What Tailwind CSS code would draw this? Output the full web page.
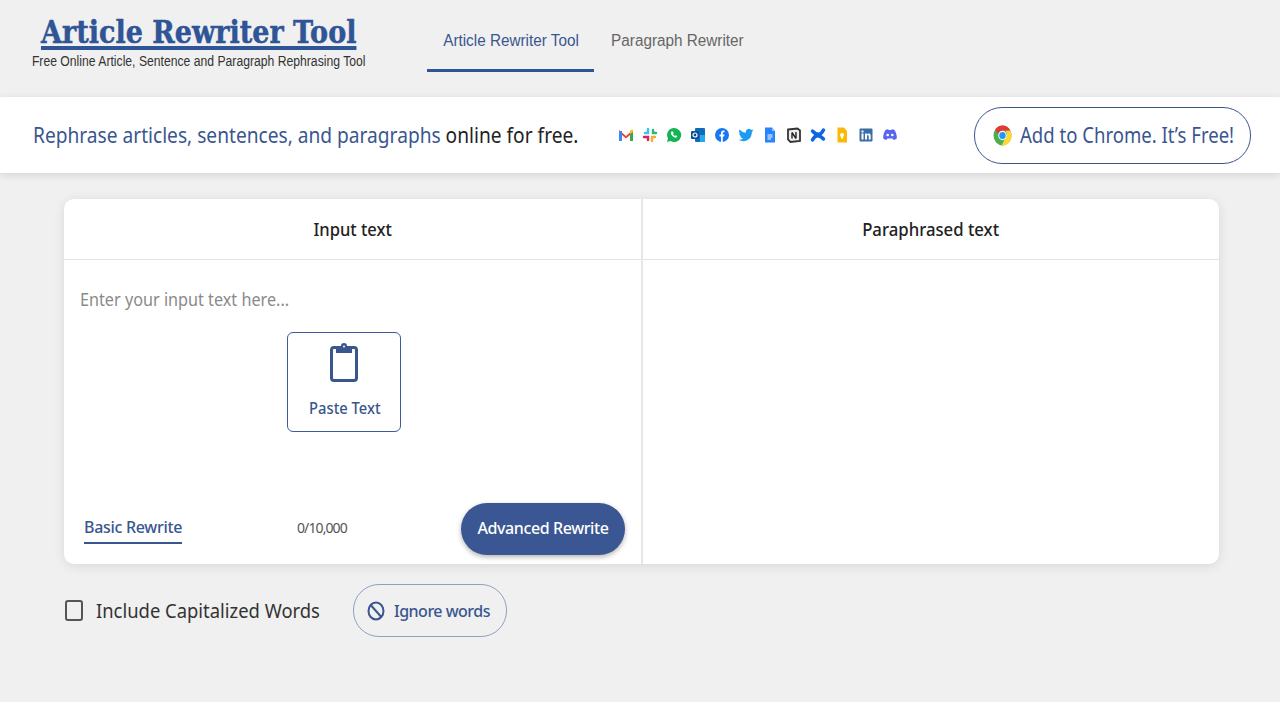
<!DOCTYPE html>
<html lang="en">
<head>
    <meta charset="UTF-8">
    <title>Article Rewriter Tool</title>
    <script src="https://cdn.jsdelivr.net/npm/@tailwindcss/browser@4"></script>
</head>
<body class="bg-white font-['Noto_Sans',sans-serif] h-[720px] overflow-hidden">
    <div class="bg-[#f0f0f0] h-[702px]">
        <!-- Top header -->
        <header class="h-[97px] flex">
            <div class="w-[398px] flex flex-col items-center pt-[14px]">
                <a class="inline-block scale-x-[.845] font-['DejaVu_Serif',serif] font-bold text-[32px] leading-[36px] text-[#2f5597] [-webkit-text-stroke:0.5px_#2f5597] underline decoration-[4px] underline-offset-[3px] whitespace-nowrap">Article Rewriter Tool</a>
                <div class="scale-x-[.87] font-['Liberation_Sans',sans-serif] text-[14px] leading-[16px] mt-[3px] text-[#333] whitespace-nowrap">Free Online Article, Sentence and Paragraph Rephrasing Tool</div>
            </div>
            <nav class="flex ml-[29px] font-['Liberation_Sans',sans-serif] text-[16px]">
                <a class="w-[167px] h-[72px] pt-[29px] text-center text-[#39568f] border-b-[3px] border-[#2f5597]"><span class="inline-block scale-x-[.955]">Article Rewriter Tool</span></a>
                <a class="w-[167px] h-[72px] pt-[29px] text-center text-[#666]"><span class="inline-block scale-x-[.955] whitespace-nowrap">Paragraph Rewriter</span></a>
            </nav>
        </header>

        <!-- Promo strip -->
        <div class="h-[76px] bg-white shadow-[0_2px_8px_rgba(0,0,0,0.12)] flex items-center pl-[33px]">
            <div class="shrink-0 w-[585px] -mt-[2px] origin-left scale-x-[.87] text-[22px] text-[#39568f] whitespace-nowrap">Rephrase articles, sentences, and paragraphs <span class="text-[#222]">online for free.</span></div>
            <div class="flex items-center gap-[8px] w-[356px] shrink-0">
                <!-- gmail -->
                <svg width="16" height="14" viewBox="0 0 16 14"><path d="M1 13V2l7 6 7-6v11h-3V7L8 10.500 4 7v6z" fill="#ea4335"/><path d="M1 13V3h3v10z" fill="#4285f4"/><path d="M12 13V3h3v10z" fill="#34a853"/><path d="M12 6V3l2-1.500 1 .5v2z" fill="#fbbc04"/></svg>
                <!-- slack -->
                <svg width="16" height="16" viewBox="0 0 16 16" fill="none" stroke-width="2.400" stroke-linecap="round"><path d="M6 2v4H3" stroke="#36c5f0"/><path d="M14 6h-3V3" stroke="#2eb67d"/><path d="M10 14v-4h3" stroke="#ecb22e"/><path d="M2 10h4v3" stroke="#e01e5a"/></svg>
                <!-- whatsapp -->
                <svg width="16" height="16" viewBox="0 0 16 16"><path d="M8 1a7 7 0 0 0-6 10.500L1 15l3.600-1A7 7 0 1 0 8 1z" fill="#12b454"/><path d="M5.500 4.500c-1 1-.8 2.500.5 4s3 2.500 4.300 2c.7-.3 1-.9 1-1.400L9.700 8.200l-.8.800c-.8-.3-1.500-1-1.900-1.900l.8-.8L6.900 4.500z" fill="#fff"/></svg>
                <!-- outlook -->
                <svg width="16" height="16" viewBox="0 0 16 16"><rect x="5" y="1" width="10" height="14" rx="1" fill="#0f6cbd"/><rect x="10" y="8" width="5" height="7" fill="#28a8ea"/><rect x="1" y="4" width="8" height="8" rx="1" fill="#0a4f94"/><circle cx="5" cy="8" r="2" fill="none" stroke="#fff" stroke-width="1.200"/></svg>
                <!-- facebook -->
                <svg width="16" height="16" viewBox="0 0 16 16"><circle cx="8" cy="8" r="7" fill="#1877f2"/><path d="M7 15V9.500H5.500V7.500H7V6c0-1.600 1-2.500 2.400-2.500l1.100.1V5.300H9.700c-.7 0-.9.400-.9.900v1.300h1.700l-.3 2H8.800V15z" fill="#fff"/></svg>
                <!-- twitter -->
                <svg width="16" height="16" viewBox="0 0 24 24"><path d="M23 5c-.8.400-1.700.6-2.600.7.900-.6 1.600-1.400 2-2.500-.9.500-1.800.9-2.900 1.100A4.600 4.600 0 0 0 11.700 8.500 13 13 0 0 1 2.300 3.700a4.600 4.600 0 0 0 1.400 6.100c-.7 0-1.400-.2-2-.6 0 2.200 1.600 4.100 3.700 4.600-.7.200-1.400.2-2.100.1.600 1.800 2.300 3.100 4.300 3.200A9.200 9.200 0 0 1 .8 19a13 13 0 0 0 20-11.500c.9-.7 1.700-1.500 2.200-2.500z" fill="#1d9bf0"/></svg>
                <!-- docs -->
                <svg width="16" height="16" viewBox="0 0 16 16"><path d="M3 .5h7l3 3.500v11.500H3z" fill="#2684fc"/><path d="M10 .5l3 3.500h-3z" fill="#a1c2fa"/><path d="M5.500 8h5M5.500 10h5M5.500 12h3.500" stroke="#fff"/></svg>
                <!-- notion -->
                <svg width="16" height="16" viewBox="0 0 16 16"><path d="M2 2.500 11.500 1.500 14 3.500V14L4.500 15 2 12.500z" fill="#eee" stroke="#333" stroke-width="1.800"/><path d="M6 5.500v6M6 5.500l4 6M10 5v6.500" stroke="#222" stroke-width="1.400" fill="none"/></svg>
                <!-- confluence -->
                <svg width="16" height="16" viewBox="0 0 16 16" fill="none" stroke="#0b66e4" stroke-width="3.400" stroke-linecap="round"><path d="M2.500 13C5 8 9 7 13.500 12"/><path d="M13.500 3C11 8 7 9 2.500 4"/></svg>
                <!-- keep -->
                <svg width="16" height="16" viewBox="0 0 16 16"><path d="M3.500 .5h6.500l3 3.500v11.500H3.500z" fill="#fbb905"/><circle cx="8" cy="8" r="2" fill="#fff"/><rect x="7" y="9.500" width="2" height="2" fill="#fff"/></svg>
                <!-- linkedin -->
                <svg width="16" height="16" viewBox="0 0 16 16"><rect x="1.500" y="1.500" width="13" height="13" rx="1" fill="#3a6ea5"/><path d="M3.500 6.500h2v6h-2zM3.500 3.500h2v2h-2zM7 6.500h2v1c.8-1.400 3.700-1.500 3.700 1.200v3.800h-2V9c0-1.200-1.700-1.200-1.700 0v3.500H7z" fill="#fff"/></svg>
                <!-- discord -->
                <svg width="16" height="16" viewBox="0 0 16 16"><path d="M3.500 3C5 2.300 6 2.200 6.300 2.500l.3.600h2.800l.3-.6c.3-.3 1.300-.2 2.800.5 1.700 2.700 2.500 5.500 2.300 8.500-1 .8-2.200 1.300-3.300 1.500l-.8-1.300-.1-.2H5.400l-.9 1.500c-1.100-.2-2.300-.7-3.300-1.500C1 8.500 1.800 5.700 3.500 3z" fill="#5865f2"/><circle cx="5.700" cy="8" r="1.300" fill="#fff"/><circle cx="10.300" cy="8" r="1.300" fill="#fff"/></svg>
            </div>
            <a class="w-[277px] h-[57px] shrink-0 flex items-center pl-[18px] gap-[8px] rounded-[28px] border border-[#39568f] text-[#39568f] whitespace-nowrap">
                <svg class="shrink-0" width="19" height="21" viewBox="0 0 20 20" preserveAspectRatio="none"><circle cx="10" cy="10" r="9.500" fill="#4caf50"/><path d="M10 .500a9.500 9.500 0 0 1 8.400 5H10a4.500 4.500 0 0 0-4.300 3.200L2.200 4.600A9.500 9.500 0 0 1 10 .500z" fill="#e53935"/><path d="M18.400 5.500A9.500 9.500 0 0 1 9 19.500l4-6.800a4.500 4.500 0 0 0 0-7.200z" fill="#fdd835"/><circle cx="10" cy="10" r="4.500" fill="#fff"/><circle cx="10" cy="10" r="3.400" fill="#2196f3"/></svg>
                <span class="inline-block shrink-0 -mt-[2px] origin-left scale-x-[.843] text-[22px]">Add to Chrome. It’s Free!</span>
            </a>
        </div>

        <!-- Editor card -->
        <main class="mx-[64px] w-[1155px] mt-[26px] h-[365px] bg-white rounded-[10px] shadow-[0_2px_12px_rgba(0,0,0,0.1)] grid grid-cols-[579px_576px]">
            <section class="border-r-2 border-[#e6e6e6] flex flex-col">
                <div class="h-[61px] border-b border-[#e2e2e2] flex items-center justify-center font-medium text-[18px] text-[#222]"><span class="inline-block scale-x-[.92]">Input text</span></div>
                <div class="px-[16px] pt-[26px] text-[18px] leading-[26px] text-[#8a8a8a]"><span class="inline-block origin-left scale-x-[.9]">Enter your input text here...</span></div>
                <button class="self-start ml-[223px] mt-[20px] w-[114px] h-[100px] rounded-[6px] border-[1.5px] border-[#3d5c9c] flex flex-col items-center text-[#39568f]">
                    <svg class="mt-[9px]" width="32" height="42" viewBox="0 0 32 42" fill="none"><rect x="3.500" y="5.500" width="25" height="33" rx="2.500" stroke="#39568f" stroke-width="3"/><path d="M8 4h5a3 3 0 0 1 6 0h5v7H8z" fill="#39568f"/><circle cx="16" cy="4.500" r="1" fill="#fff"/></svg>
                    <span class="mt-[13px] inline-block translate-x-[1px] scale-x-[.92] font-medium text-[16px] leading-[22px]">Paste Text</span>
                </button>
                <div class="mt-auto h-[70px] pl-[20px] pr-[16px] pb-[1px] flex items-center">
                    <a class="w-[98px] h-[31px] text-center font-medium text-[16px] leading-[28px] tracking-[-0.3px] text-[#39568f] border-b-2 border-[#39568f] whitespace-nowrap">Basic Rewrite</a>
                    <span class="ml-[115px] -mt-[3px] text-[14px] tracking-[-0.9px] text-[#555]">0/10,000</span>
                    <button class="ml-auto w-[164px] h-[52px] pb-[2px] rounded-[26px] bg-[#3a5693] text-white font-medium text-[16px] tracking-[-0.4px] shadow-[0_2px_5px_rgba(0,0,0,0.3)] whitespace-nowrap">Advanced Rewrite</button>
                </div>
            </section>
            <section class="flex flex-col">
                <div class="h-[61px] border-b border-[#e2e2e2] flex items-center justify-center font-medium text-[18px] text-[#222]"><span class="inline-block scale-x-[.93]">Paraphrased text</span></div>
            </section>
        </main>

        <!-- Options -->
        <div class="ml-[65px] mt-[20px] flex items-center">
            <span class="w-[18px] h-[21px] rounded-[3px] border-2 border-[#555]"></span>
            <span class="ml-[13px] w-[225px] origin-left scale-x-[.92] text-[20px] text-[#333] whitespace-nowrap">Include Capitalized Words</span>
            <button class="ml-[32px] w-[154px] h-[53px] rounded-[26px] border border-[#8fa0c4] flex items-center pl-[13px] gap-[9px] text-[#39568f] font-medium text-[16px] tracking-[-0.5px]">
                <svg width="18" height="20" viewBox="0 0 18 20" fill="none" stroke="#39568f" stroke-width="2"><ellipse cx="9" cy="10" rx="7.500" ry="8.500"/><path d="M3.700 4 14.300 16"/></svg>
                Ignore words
            </button>
        </div>
    </div>
</body>
</html>
